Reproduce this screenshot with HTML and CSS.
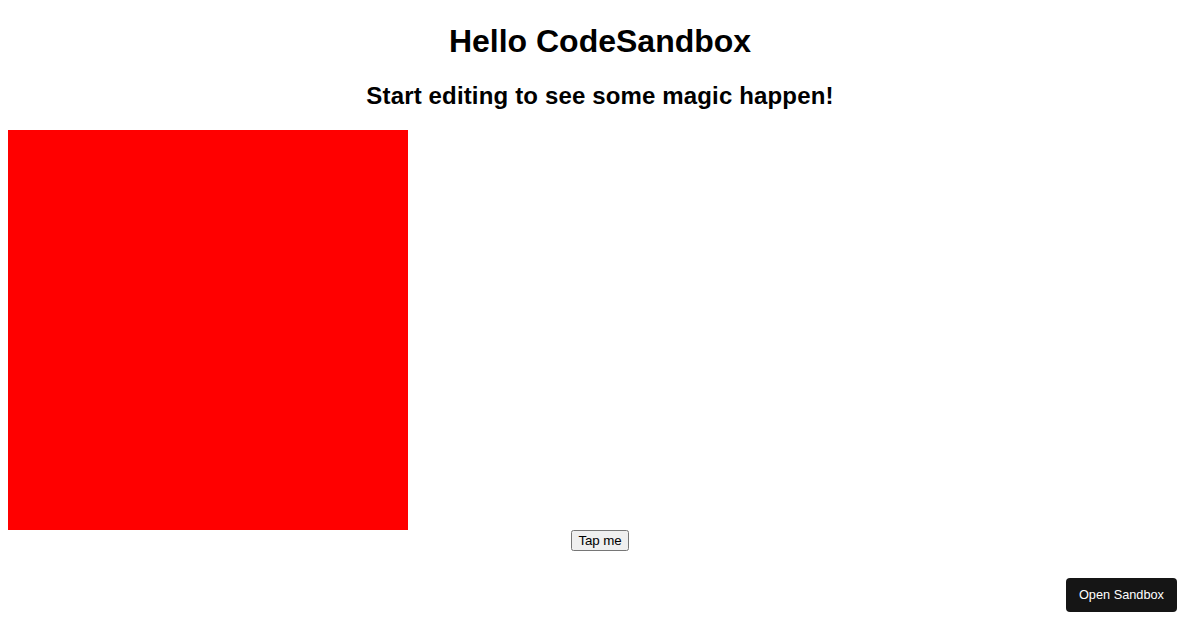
FILE: index.html
```html
<!DOCTYPE html>
<html>
<head>
<meta charset="utf-8">
<link rel="stylesheet" href="styles.css">
</head>
<body>
<div class="app">
  <h1>Hello CodeSandbox</h1>
  <h2>Start editing to see some magic happen!</h2>
  <div class="box"></div>
  <button class="tap">Tap me</button>
</div>
<a class="open-sandbox">Open Sandbox</a>
</body>
</html>
```

FILE: styles.css
```css
body {
  margin: 8px;
  font-family: "Liberation Sans", Arial, sans-serif;
  background: #fff;
}
.app {
  text-align: center;
}
h1 {
  font-size: 32px;
  margin: 15.44px 0 21.44px;
}
h2 {
  font-size: 24px;
  margin: 19.92px 0;
  letter-spacing: 0.15px;
}
.box {
  width: 400px;
  height: 400px;
  background: #ff0000;
}
.tap {
  font-family: "Liberation Sans", Arial, sans-serif;
  font-size: 13.33px;
  letter-spacing: -0.15px;
}
.open-sandbox {
  position: fixed;
  right: 23px;
  bottom: 18px;
  background: #151515;
  color: #fff;
  font-size: 12.75px;
  line-height: 14px;
  padding: 10px 13px;
  border-radius: 4px;
}
```
